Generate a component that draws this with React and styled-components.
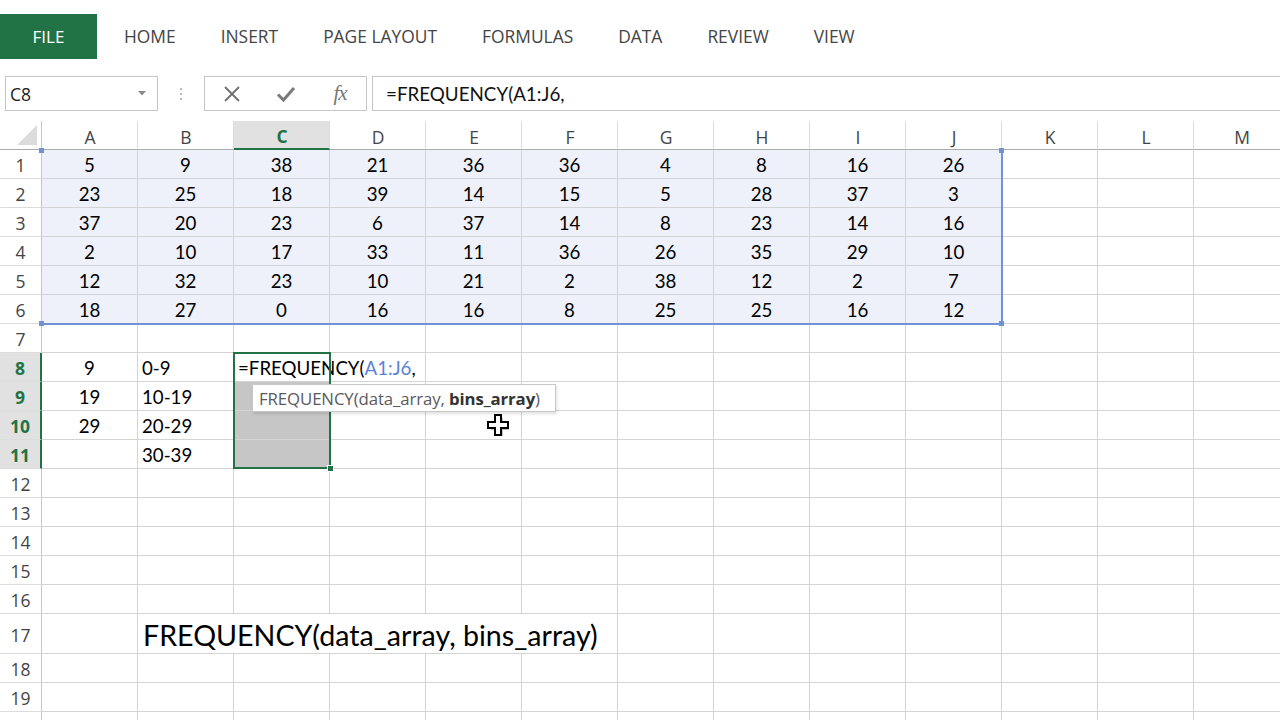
import React from 'react';
import styled, { createGlobalStyle } from 'styled-components';

const GlobalStyle = createGlobalStyle`
  html, body { margin: 0; padding: 0; background: #fff; overflow: hidden; }
  body { width: 1280px; height: 720px; font-family: "Open Sans", "Noto Sans", sans-serif; }
  *, *::before, *::after { box-sizing: border-box; }
`;

const GREEN = '#217346';
const BLUE = '#7092d9';
const GRID = '#d4d4d4';

const Page = styled.div`
  width: 1280px;
  height: 720px;
  overflow: hidden;
  display: flex;
  flex-direction: column;
  background: #fff;
`;

const TabBar = styled.nav`
  display: flex;
  align-items: stretch;
  height: 59px;
  padding-top: 14px;
  gap: 45px;
  flex-shrink: 0;
`;

const FileTab = styled.div`
  width: 97px;
  background: ${GREEN};
  color: #fff;
  display: flex;
  align-items: center;
  justify-content: center;
  font-size: 17px;
  margin-right: -18px;
  padding-bottom: 1px;
`;

const Tab = styled.div`
  display: flex;
  align-items: center;
  font-size: 17.4px;
  color: #444;
  padding-bottom: 2px;
`;

const FormulaBar = styled.div`
  display: flex;
  align-items: stretch;
  height: 35px;
  margin-top: 17px;
  padding-left: 5px;
  flex-shrink: 0;
`;

const NameBox = styled.div`
  width: 153px;
  border: 1px solid #c6c6c6;
  display: flex;
  align-items: center;
  justify-content: space-between;
  padding: 0 11px 0 4px;
  font-size: 17.5px;
  color: #222;
`;

const Grip = styled.div`
  width: 46px;
  display: flex;
  flex-direction: column;
  align-items: center;
  justify-content: center;
  gap: 3px;
`;

const GripDot = styled.span`
  width: 2px;
  height: 2px;
  background: #b8b8b8;
`;

const FxButtons = styled.div`
  width: 163px;
  border: 1px solid #c6c6c6;
  display: grid;
  grid-template-columns: repeat(3, 54px);
  align-items: center;
  justify-items: center;
`;

const FxGlyph = styled.span`
  font-family: "Liberation Serif", "DejaVu Serif", serif;
  font-style: italic;
  font-size: 21px;
  color: #777;
  letter-spacing: -1px;
  line-height: 1;
`;

const FormulaInput = styled.div`
  flex: 1;
  margin-left: 5px;
  border: 1px solid #c6c6c6;
  border-right: none;
  display: flex;
  align-items: center;
  padding-left: 13px;
  font-family: Lato, "Open Sans", sans-serif;
  font-size: 18.8px;
  color: #111;
`;

const Sheet = styled.div`
  position: relative;
  margin-top: 10px;
  display: grid;
  grid-template-columns: 42px repeat(13, 96px);
  grid-template-rows: 29px repeat(16, 29px) 40px repeat(3, 29px);
`;

const Corner = styled.div`
  border-right: 1px solid #c6c6c6;
  border-bottom: 1px solid #ababab;
  display: flex;
  align-items: flex-end;
  justify-content: flex-end;
  padding: 0 4px 4px 0;
`;

const CornerTriangle = styled.span`
  width: 0;
  height: 0;
  border-left: 20px solid transparent;
  border-bottom: 20px solid #dcdcdc;
`;

const ColHeader = styled.div`
  border-right: 1px solid #dcdcdc;
  border-bottom: ${p => (p.$active ? `2px solid ${GREEN}` : '1px solid #ababab')};
  background: ${p => (p.$active ? '#e1e1e1' : '#fff')};
  color: ${p => (p.$active ? GREEN : '#444')};
  font-weight: ${p => (p.$active ? 700 : 400)};
  font-size: 17.5px;
  display: flex;
  align-items: center;
  justify-content: center;
  padding: 3px 0 0 1px;
`;

const RowHeader = styled.div`
  border-right: ${p => (p.$active ? `2px solid ${GREEN}` : '1px solid #c6c6c6')};
  border-bottom: 1px solid #dcdcdc;
  background: ${p => (p.$active ? '#e1e1e1' : '#fff')};
  color: ${p => (p.$active ? GREEN : '#444')};
  font-weight: ${p => (p.$active ? 700 : 400)};
  font-size: 17.5px;
  display: flex;
  align-items: center;
  justify-content: center;
  padding-top: 2px;
`;

const Cell = styled.div`
  grid-column: span ${p => p.$span || 1};
  border-right: 1px solid ${GRID};
  border-bottom: 1px solid ${GRID};
  background: ${p => (p.$fill === 'range' ? '#eef0fa' : p.$fill === 'shade' ? '#c6c6c6' : 'transparent')};
  display: flex;
  align-items: center;
  justify-content: ${p => (p.$align === 'left' ? 'flex-start' : 'center')};
  padding-top: 2px;
  padding-left: ${p => (p.$align === 'left' ? (p.$big ? '5px' : '4px') : '0')};
  font-family: Lato, "Open Sans", sans-serif;
  font-size: ${p => (p.$big ? '28.6px' : '18.7px')};
  color: #000;
  white-space: nowrap;
  overflow: visible;
`;

const RefText = styled.span`
  color: #5b82d8;
`;

const RangeBox = styled.div`
  position: absolute;
  left: 42px;
  top: 29px;
  width: 961px;
  height: 175px;
  border-right: 2px solid ${BLUE};
  border-bottom: 2px solid ${BLUE};
  pointer-events: none;
`;

const Handle = styled.span`
  position: absolute;
  width: 5px;
  height: 5px;
  background: ${p => p.$color};
  ${p => (p.$v === 'top' ? 'top: -2px;' : 'bottom: -3px;')}
  ${p => (p.$h === 'left' ? 'left: -3px;' : 'right: -3px;')}
`;

const SelectionBox = styled.div`
  position: absolute;
  left: 233px;
  top: 231px;
  width: 98px;
  height: 117px;
  border: 2px solid ${GREEN};
  pointer-events: none;
`;

const FillHandle = styled.span`
  position: absolute;
  right: -5px;
  bottom: -5px;
  width: 7px;
  height: 7px;
  background: ${GREEN};
  border: 1px solid #fff;
`;

const Tooltip = styled.div`
  position: absolute;
  left: 252px;
  top: 263px;
  width: 304px;
  height: 28px;
  padding: 0 6px;
  background: #fff;
  border: 1px solid #c8c8c8;
  box-shadow: 1px 2px 3px rgba(0, 0, 0, 0.12);
  display: flex;
  align-items: center;
  font-size: 16.8px;
  color: #5a5a5a;
  white-space: nowrap;
  letter-spacing: -0.1px;
`;

const Bold = styled.b`
  color: #333;
  font-weight: 700;
`;

const Cursor = styled.svg`
  position: absolute;
  left: 486px;
  top: 292px;
  pointer-events: none;
`;

const COLS = ['A', 'B', 'C', 'D', 'E', 'F', 'G', 'H', 'I', 'J', 'K', 'L', 'M'];

const DATA = [
  [5, 9, 38, 21, 36, 36, 4, 8, 16, 26],
  [23, 25, 18, 39, 14, 15, 5, 28, 37, 3],
  [37, 20, 23, 6, 37, 14, 8, 23, 14, 16],
  [2, 10, 17, 33, 11, 36, 26, 35, 29, 10],
  [12, 32, 23, 10, 21, 2, 38, 12, 2, 7],
  [18, 27, 0, 16, 16, 8, 25, 25, 16, 12],
];

const BINS = { 8: ['9', '0-9'], 9: ['19', '10-19'], 10: ['29', '20-29'], 11: ['', '30-39'] };

function renderRow(r) {
  const cells = [];
  if (r <= 6) {
    COLS.forEach((c, i) => {
      const v = i < 10 ? DATA[r - 1][i] : '';
      cells.push(
        <Cell key={c} $fill={i < 10 ? 'range' : undefined}>
          {v}
        </Cell>
      );
    });
  } else if (BINS[r]) {
    const [a, b] = BINS[r];
    cells.push(<Cell key="A">{a}</Cell>);
    cells.push(
      <Cell key="B" $align="left">
        {b}
      </Cell>
    );
    if (r === 8) {
      cells.push(
        <Cell key="C" $align="left" $span={2}>
          =FREQUENCY(<RefText>A1:J6</RefText>,
        </Cell>
      );
      for (let i = 4; i < 13; i++) cells.push(<Cell key={COLS[i]} />);
    } else {
      cells.push(<Cell key="C" $fill="shade" />);
      for (let i = 3; i < 13; i++) cells.push(<Cell key={COLS[i]} />);
    }
  } else if (r === 17) {
    cells.push(<Cell key="A" />);
    cells.push(
      <Cell key="B" $align="left" $big $span={5}>
        FREQUENCY(data_array, bins_array)
      </Cell>
    );
    for (let i = 6; i < 13; i++) cells.push(<Cell key={COLS[i]} />);
  } else {
    COLS.forEach(c => cells.push(<Cell key={c} />));
  }
  return (
    <React.Fragment key={r}>
      <RowHeader $active={r >= 8 && r <= 11}>{r <= 19 ? r : ''}</RowHeader>
      {cells}
    </React.Fragment>
  );
}

export default function App() {
  const rows = Array.from({ length: 20 }, (_, i) => i + 1);
  return (
    <Page>
      <GlobalStyle />
      <TabBar>
        <FileTab>FILE</FileTab>
        <Tab>HOME</Tab>
        <Tab>INSERT</Tab>
        <Tab>PAGE LAYOUT</Tab>
        <Tab>FORMULAS</Tab>
        <Tab>DATA</Tab>
        <Tab>REVIEW</Tab>
        <Tab>VIEW</Tab>
      </TabBar>

      <FormulaBar>
        <NameBox>
          <span>C8</span>
          <svg width="8" height="5" viewBox="0 0 8 5">
            <path d="M0 0 L8 0 L4 4.5 Z" fill="#8a8a8a" />
          </svg>
        </NameBox>
        <Grip>
          <GripDot />
          <GripDot />
          <GripDot />
        </Grip>
        <FxButtons>
          <svg width="18" height="18" viewBox="0 0 18 18">
            <path d="M2 2 L16 16 M16 2 L2 16" stroke="#707070" strokeWidth="1.8" fill="none" />
          </svg>
          <svg width="20" height="18" viewBox="0 0 20 18">
            <path d="M2 9.5 L7.5 15 L18 3" stroke="#7a7a7a" strokeWidth="3" fill="none" />
          </svg>
          <FxGlyph>fx</FxGlyph>
        </FxButtons>
        <FormulaInput>=FREQUENCY(A1:J6,</FormulaInput>
      </FormulaBar>

      <Sheet>
        <Corner>
          <CornerTriangle />
        </Corner>
        {COLS.map(c => (
          <ColHeader key={c} $active={c === 'C'}>
            {c}
          </ColHeader>
        ))}
        {rows.map(renderRow)}

        <RangeBox>
          <Handle $color={BLUE} $v="top" $h="left" />
          <Handle $color={BLUE} $v="top" $h="right" />
          <Handle $color={BLUE} $v="bottom" $h="left" />
          <Handle $color={BLUE} $v="bottom" $h="right" />
        </RangeBox>

        <SelectionBox>
          <FillHandle />
        </SelectionBox>

        <Tooltip>
          FREQUENCY(data_array,&nbsp;<Bold>bins_array</Bold>)
        </Tooltip>

        <Cursor width="26" height="26" viewBox="0 0 26 26">
          <path
            d="M9 3 H15 V9 H21 V15 H15 V21 H9 V15 H3 V9 H9 Z"
            transform="translate(2 2)"
            fill="#9a9a9a"
            opacity="0.6"
          />
          <path
            d="M9 2 H15 V9 H22 V15 H15 V22 H9 V15 H2 V9 H9 Z"
            fill="#fff"
            stroke="#000"
            strokeWidth="2"
            strokeLinejoin="miter"
          />
        </Cursor>
      </Sheet>
    </Page>
  );
}
